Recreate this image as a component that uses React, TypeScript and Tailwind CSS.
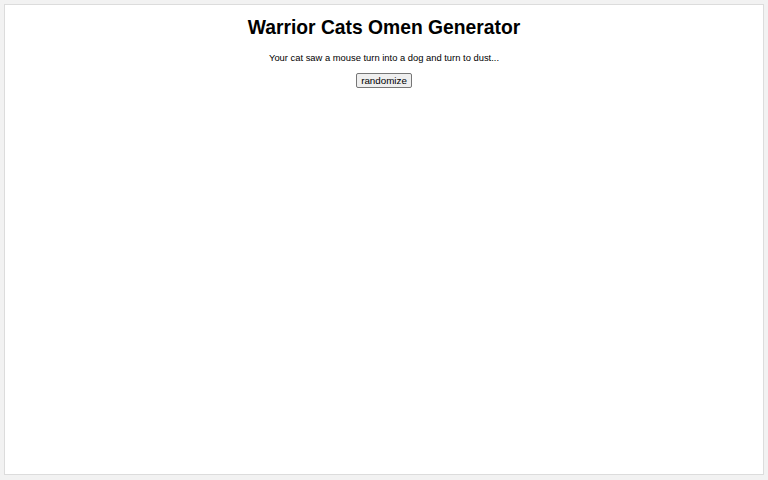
import React, { useState } from 'react';

const omens = [
  'Your cat saw a mouse turn into a dog and turn to dust...',
  'Your cat saw a falling star land in the river...',
  'Your cat saw a hawk carry away a burning leaf...',
];

export default function App() {
  const [omen, setOmen] = useState(omens[0]);

  const randomize = () => {
    setOmen(omens[Math.floor(Math.random() * omens.length)]);
  };

  return (
    <div className="h-[480px] w-[768px] bg-[#f2f2f2] p-[4px] font-['Liberation_Sans',Arial,sans-serif] text-black">
      <div className="flex h-[471px] flex-col items-center border border-[#dcdcdc] bg-white">
        <h1 className="mt-[11px] text-[19.3px] font-bold leading-[24px]">Warrior Cats Omen Generator</h1>
        <p className="mt-[12px] text-[9.4px] leading-[12px]">{omen}</p>
        <button
          onClick={randomize}
          className="mt-[9px] h-[15px] rounded-[2px] border border-[#767676] bg-[#efefef] px-[4px] text-[9.8px] leading-[12px]"
        >
          randomize
        </button>
      </div>
    </div>
  );
}
